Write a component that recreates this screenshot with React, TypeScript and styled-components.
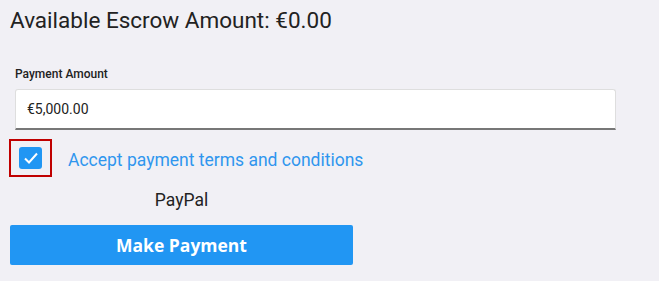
import React from 'react';
import styled, { createGlobalStyle } from 'styled-components';

const GlobalStyle = createGlobalStyle`
  html, body {
    margin: 0;
    padding: 0;
    background: #f1f0f5;
    font-family: Roboto, "Liberation Sans", sans-serif;
  }
`;

const Page = styled.div`
  padding: 6px 10px 0 10px;
  display: flex;
  flex-direction: column;
`;

const Heading = styled.h2`
  margin: 0;
  font-size: 22.5px;
  font-weight: 400;
  line-height: 28px;
  color: #222;
`;

const Field = styled.div`
  margin-top: 32px;
  padding-left: 5px;
  width: 601px;
  display: flex;
  flex-direction: column;
`;

const Label = styled.label`
  font-size: 12px;
  font-weight: 500;
  color: #222;
  line-height: 16px;
`;

const Input = styled.input`
  margin-top: 7px;
  box-sizing: border-box;
  height: 41px;
  width: 100%;
  padding: 0 11px;
  background: #fff;
  border: 1px solid #dedede;
  border-bottom: 2px solid #777;
  border-radius: 3px 3px 0 0;
  font-family: Roboto, "Liberation Sans", sans-serif;
  font-size: 14px;
  color: #222;
  outline: none;
`;

const CheckRow = styled.div`
  margin-top: 9px;
  display: flex;
  align-items: center;
`;

const CheckFrame = styled.div`
  box-sizing: border-box;
  width: 43px;
  height: 38px;
  margin-left: -1px;
  border: 2px solid #c00000;
  display: flex;
  align-items: center;
  justify-content: center;
`;

const CheckBox = styled.div`
  width: 23px;
  height: 22px;
  border-radius: 3px;
  background: #2196f3;
  display: flex;
  align-items: center;
  justify-content: center;
`;

const CheckText = styled.span`
  margin-left: 16px;
  margin-top: 3px;
  font-size: 17.5px;
  color: #2f96ee;
`;

const Column = styled.div`
  width: 343px;
  display: flex;
  flex-direction: column;
  align-items: center;
`;

const Provider = styled.div`
  margin-top: 11px;
  font-size: 17.5px;
  line-height: 24px;
  color: #222;
`;

const PayButton = styled.button`
  margin-top: 13px;
  width: 343px;
  height: 40px;
  border: none;
  border-radius: 2px;
  background: #2196f3;
  color: #fff;
  font-family: "Open Sans", sans-serif;
  font-weight: 700;
  font-size: 17.5px;
  cursor: pointer;
`;

export default function App() {
  return (
    <>
      <GlobalStyle />
      <Page>
        <Heading>Available Escrow Amount: €0.00</Heading>
        <Field>
          <Label>Payment Amount</Label>
          <Input defaultValue="€5,000.00" />
        </Field>
        <CheckRow>
          <CheckFrame>
            <CheckBox>
              <svg width="16" height="14" viewBox="0 0 16 14">
                <path d="M2 7.5 L6 11.5 L14 2.5" fill="none" stroke="#fff" strokeWidth="2" />
              </svg>
            </CheckBox>
          </CheckFrame>
          <CheckText>Accept payment terms and conditions</CheckText>
        </CheckRow>
        <Column>
          <Provider>PayPal</Provider>
          <PayButton>Make Payment</PayButton>
        </Column>
      </Page>
    </>
  );
}
